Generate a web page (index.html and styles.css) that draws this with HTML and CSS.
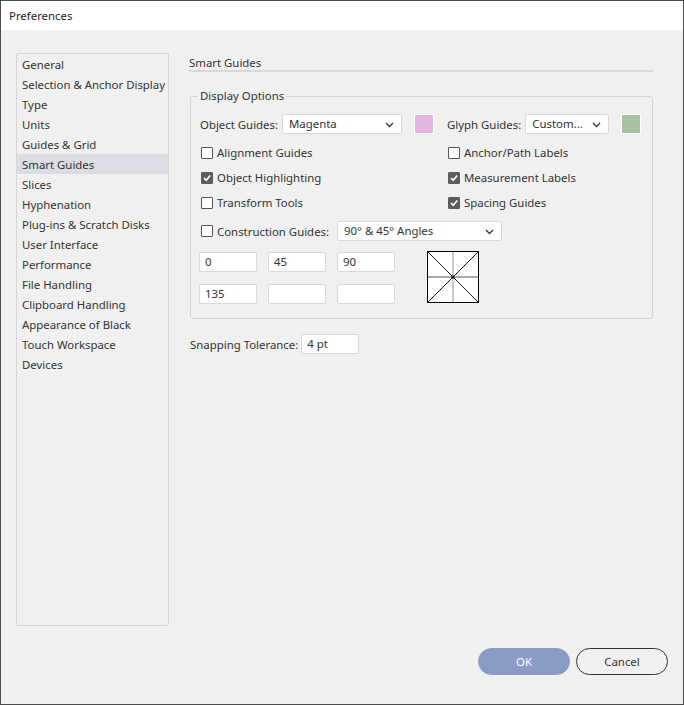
FILE: index.html
```html
<!DOCTYPE html>
<html lang="en">
<head>
    <meta charset="UTF-8">
    <title>Preferences</title>
    <link rel="stylesheet" href="styles.css">
</head>
<body>

<div class="window">
    <div class="titlebar">Preferences</div>

    <div class="content">
        <div class="main">
            <ul class="nav">
                <li>General</li>
                <li>Selection &amp; Anchor Display</li>
                <li>Type</li>
                <li>Units</li>
                <li>Guides &amp; Grid</li>
                <li class="active">Smart Guides</li>
                <li>Slices</li>
                <li>Hyphenation</li>
                <li>Plug-ins &amp; Scratch Disks</li>
                <li>User Interface</li>
                <li>Performance</li>
                <li>File Handling</li>
                <li>Clipboard Handling</li>
                <li>Appearance of Black</li>
                <li>Touch Workspace</li>
                <li>Devices</li>
            </ul>

            <div class="panel">
                <div class="panel-title">Smart Guides</div>

                <fieldset class="group">
                    <legend>Display Options</legend>

                    <div class="cols">
                        <div class="col">
                            <div class="field">
                                <span>Object Guides:</span>
                                <div class="select sel-object">Magenta
                                    <svg class="chev" width="9" height="6" viewBox="0 0 9 6"><polyline points="1,1 4.5,4.5 8,1" fill="none" stroke="#333" stroke-width="1.3"/></svg>
                                </div>
                                <span class="swatch magenta"></span>
                            </div>
                            <div class="check"><span class="box"></span>Alignment Guides</div>
                            <div class="check"><span class="box on"><svg width="10" height="10" viewBox="0 0 10 10"><polyline points="2,5 4.2,7.3 8.2,2.6" fill="none" stroke="#fff" stroke-width="1.6"/></svg></span>Object Highlighting</div>
                            <div class="check"><span class="box"></span>Transform Tools</div>
                        </div>
                        <div class="col">
                            <div class="field">
                                <span>Glyph Guides:</span>
                                <div class="select sel-glyph">Custom...
                                    <svg class="chev" width="9" height="6" viewBox="0 0 9 6"><polyline points="1,1 4.5,4.5 8,1" fill="none" stroke="#333" stroke-width="1.3"/></svg>
                                </div>
                                <span class="swatch green"></span>
                            </div>
                            <div class="check"><span class="box"></span>Anchor/Path Labels</div>
                            <div class="check"><span class="box on"><svg width="10" height="10" viewBox="0 0 10 10"><polyline points="2,5 4.2,7.3 8.2,2.6" fill="none" stroke="#fff" stroke-width="1.6"/></svg></span>Measurement Labels</div>
                            <div class="check"><span class="box on"><svg width="10" height="10" viewBox="0 0 10 10"><polyline points="2,5 4.2,7.3 8.2,2.6" fill="none" stroke="#fff" stroke-width="1.6"/></svg></span>Spacing Guides</div>
                        </div>
                    </div>

                    <div class="check construction">
                        <span class="box"></span>Construction Guides:
                        <div class="select sel-angles">90° &amp; 45° Angles
                            <svg class="chev" width="9" height="6" viewBox="0 0 9 6"><polyline points="1,1 4.5,4.5 8,1" fill="none" stroke="#333" stroke-width="1.3"/></svg>
                        </div>
                    </div>

                    <div class="angles">
                        <div class="angle-grid">
                            <div class="input">0</div>
                            <div class="input">45</div>
                            <div class="input">90</div>
                            <div class="input">135</div>
                            <div class="input"></div>
                            <div class="input"></div>
                        </div>
                        <svg class="preview" width="52" height="52" viewBox="0 0 52 52">
                            <rect x="0.5" y="0.5" width="51" height="51" fill="#fff" stroke="#000"/>
                            <line x1="26" y1="1" x2="26" y2="51" stroke="#b4b4b4" stroke-width="1.5"/>
                            <line x1="1" y1="26" x2="51" y2="26" stroke="#8c8c8c" stroke-width="1.5"/>
                            <line x1="1" y1="1" x2="51" y2="51" stroke="#000" stroke-width="0.9"/>
                            <line x1="51" y1="1" x2="1" y2="51" stroke="#000" stroke-width="0.9"/>
                            <circle cx="26" cy="26" r="1.6" fill="#000"/>
                        </svg>
                    </div>
                </fieldset>

                <div class="field snapping">
                    <span>Snapping Tolerance:</span>
                    <div class="input">4 pt</div>
                </div>
            </div>
        </div>

        <div class="footer">
            <button class="btn primary">OK</button>
            <button class="btn">Cancel</button>
        </div>
    </div>
</div>

</body>
</html>
```

FILE: styles.css
```css
* {
    margin: 0;
    padding: 0;
    box-sizing: border-box;
    font-family: 'Noto Sans', 'Open Sans', sans-serif;
}
body {
    width: 684px;
    height: 705px;
    background: #f0f0f0;
    color: #333;
    font-size: 11.4px;
}
.window {
    width: 684px;
    height: 705px;
    border: 1px solid #4c4c4c;
    display: flex;
    flex-direction: column;
}
.titlebar {
    height: 29px;
    background: #fff;
    padding-left: 8px;
    line-height: 29px;
    font-size: 11.4px;
    color: #222;
}
.content {
    flex: 1;
    background: #f0f0f0;
    padding: 23px 15px 0 15px;
    display: flex;
    flex-direction: column;
}
.main {
    display: flex;
    gap: 20px;
    height: 573px;
}
.nav {
    list-style: none;
    width: 153px;
    height: 573px;
    border: 1px solid #d6d6d6;
    border-radius: 2px;
}
.nav li {
    height: 20px;
    line-height: 21px;
    padding-left: 5px;
    white-space: nowrap;
}
.nav li.active {
    background: #dcdce4;
}
.panel {
    width: 464px;
}
.panel-title {
    height: 19px;
    line-height: 19px;
    border-bottom: 2px solid #d9d9d9;
}
.group {
    margin: 16px 0 0 1px;
    width: 463px;
    border: 1px solid #d5d5d5;
    border-radius: 3px;
    padding: 10px 9px 14px 9px;
}
.group legend {
    padding: 0 2px;
    margin-left: -2px;
    line-height: 16px;
}
.cols {
    display: flex;
}
.col {
    display: flex;
    flex-direction: column;
}
.col:first-child {
    width: 247px;
}
.field {
    display: flex;
    align-items: center;
    gap: 4px;
    height: 20px;
    margin-bottom: 6px;
    white-space: nowrap;
}
.select {
    position: relative;
    height: 20px;
    line-height: 18px;
    background: #fff;
    border: 1px solid #d9d9d9;
    border-radius: 2px;
    padding-left: 6px;
    white-space: nowrap;
}
.chev {
    position: absolute;
    right: 7px;
    top: 7px;
}
.sel-object {
    width: 120px;
}
.sel-glyph {
    width: 84px;
}
.sel-angles {
    width: 165px;
    margin-left: 8px;
}
.swatch {
    width: 20px;
    height: 20px;
    margin-left: 8px;
    border: 1px solid #fff;
}
.magenta {
    background: #e4b4e0;
}
.green {
    background: #a8c0a0;
}
.check {
    display: flex;
    align-items: center;
    height: 25px;
    padding-left: 1px;
    white-space: nowrap;
}
.box {
    width: 12px;
    height: 12px;
    border: 1px solid #555;
    background: #fff;
    border-radius: 1px;
    margin-right: 4px;
    display: flex;
    align-items: center;
    justify-content: center;
}
.box.on {
    background: #5c5c5c;
    border-color: #5c5c5c;
}
.construction {
    height: 20px;
    margin-top: 6px;
}
.angles {
    display: flex;
    align-items: flex-start;
    gap: 32px;
    margin-top: 11px;
    margin-left: -1px;
}
.angle-grid {
    display: grid;
    grid-template-columns: repeat(3, 58px);
    gap: 12px 11px;
}
.input {
    height: 20px;
    width: 58px;
    line-height: 18px;
    background: #fff;
    border: 1px solid #d9d9d9;
    border-radius: 2px;
    padding-left: 5px;
}
.preview {
    margin-top: -1px;
}
.snapping {
    margin-top: 15px;
    margin-left: 1px;
    gap: 3px;
}
.footer {
    display: flex;
    justify-content: flex-end;
    gap: 6px;
    margin-top: 22px;
}
.btn {
    width: 92px;
    height: 27px;
    border-radius: 14px;
    border: 1px solid #333;
    background: #f0f0f0;
    color: #333;
    font-size: 11.4px;
}
.btn.primary {
    background: #8a9bc5;
    border-color: #8a9bc5;
    color: #fff;
}
```
